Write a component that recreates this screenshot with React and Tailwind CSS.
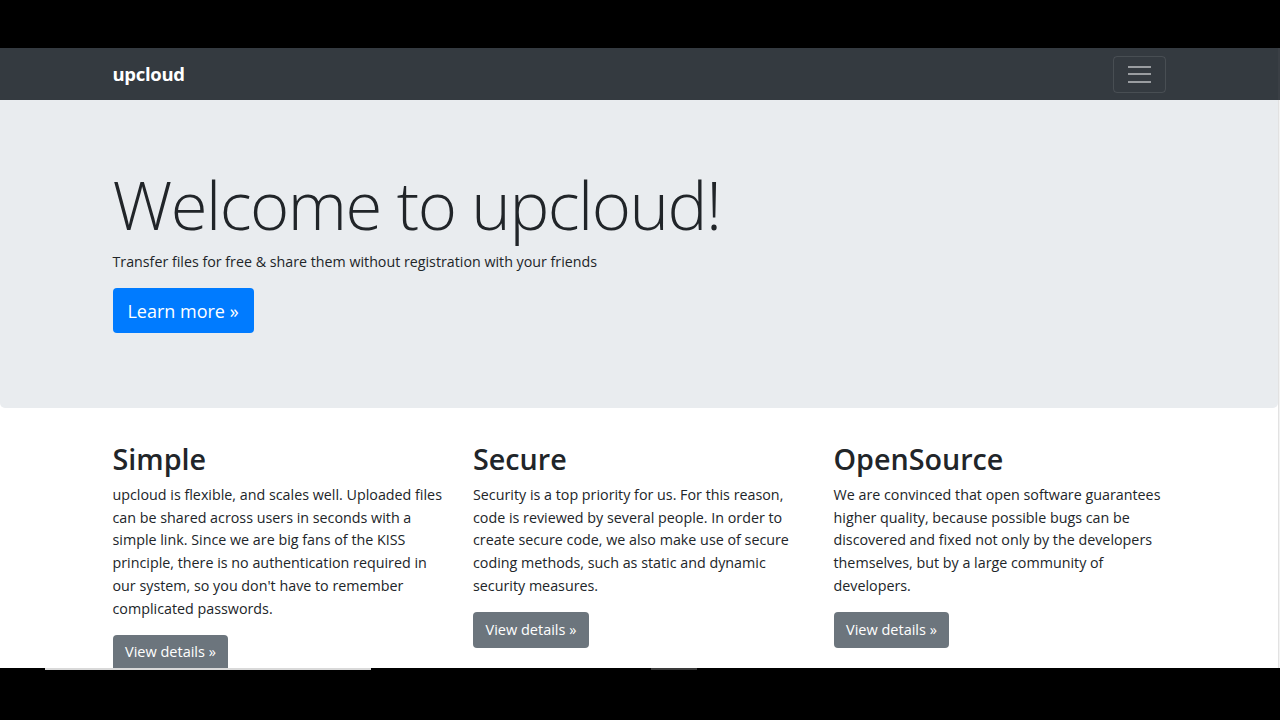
import React from "react";

const font = { fontFamily: '"Open Sans", "Noto Sans", sans-serif' };

const cols = [
  {
    title: "Simple",
    lines: [
      "upcloud is flexible, and scales well. Uploaded files",
      "can be shared across users in seconds with a",
      "simple link. Since we are big fans of the KISS",
      "principle, there is no authentication required in",
      "our system, so you don't have to remember",
      "complicated passwords.",
    ],
  },
  {
    title: "Secure",
    lines: [
      "Security is a top priority for us. For this reason,",
      "code is reviewed by several people. In order to",
      "create secure code, we also make use of secure",
      "coding methods, such as static and dynamic",
      "security measures.",
    ],
  },
  {
    title: "OpenSource",
    lines: [
      "We are convinced that open software guarantees",
      "higher quality, because possible bugs can be",
      "discovered and fixed not only by the developers",
      "themselves, but by a large community of",
      "developers.",
    ],
  },
];

export default function App() {
  return (
    <div
      className="w-[1280px] h-[720px] bg-black flex flex-col overflow-hidden text-[#212529]"
      style={font}
    >
      <div className="h-[48px] shrink-0 bg-black" />
      <div className="h-[620px] shrink-0 flex flex-col bg-white overflow-hidden">
        <nav className="h-[52px] shrink-0 bg-[#343a40] flex">
          <div className="w-[1278px] flex items-center">
            <div className="mx-auto w-[1053px] flex items-center justify-between">
              <span className="text-white text-[18.5px] font-bold tracking-[-0.3px] leading-none">
                upcloud
              </span>
              <button className="w-[53px] h-[37px] rounded-[4px] border border-white/10 flex flex-col items-center justify-center gap-[5.5px]">
                <span className="block w-[23px] h-[2px] bg-[#9a9da1]" />
                <span className="block w-[23px] h-[2px] bg-[#9a9da1]" />
                <span className="block w-[23px] h-[2px] bg-[#9a9da1]" />
              </button>
            </div>
          </div>
          <div className="w-[2px] bg-[#3a3f45]" />
        </nav>
        <div className="flex flex-1 min-h-0">
          <div className="w-[1278px] flex flex-col">
            <section className="h-[308px] shrink-0 bg-[#e9ecef] rounded-b-[5px] pt-[63px]">
              <div className="mx-auto w-[1053px]">
                <h1 className="text-[67px] leading-[82px] font-light tracking-[-1.5px] text-[#212529] whitespace-nowrap">
                  Welcome to upcloud!
                </h1>
                <p className="mt-[5px] text-[14.25px] leading-[23px] whitespace-nowrap">
                  Transfer files for free &amp; share them without registration with your friends
                </p>
                <div className="mt-[15px]">
                  <button className="h-[45px] w-[141px] rounded-[4px] bg-[#007bff] text-white text-[18px] leading-none">
                    Learn more »
                  </button>
                </div>
              </div>
            </section>
            <div className="mx-auto w-[1053px] pt-[33px] grid grid-cols-3 gap-x-[28.5px]">
              {cols.map((c) => (
                <div key={c.title} className="flex flex-col items-start">
                  <h2 className="text-[28.7px] leading-[36px] font-semibold text-[#212529]">
                    {c.title}
                  </h2>
                  <p className="mt-[7px] text-[14.3px] leading-[22.7px] text-[#212529]">
                    {c.lines.map((l, i) => (
                      <span key={i} className="block whitespace-nowrap">
                        {l}
                      </span>
                    ))}
                  </p>
                  <button className="mt-[14.5px] h-[36px] px-[12.5px] rounded-[4px] bg-[#6c757d] text-white text-[14.5px] leading-none whitespace-nowrap">
                    View details »
                  </button>
                </div>
              ))}
            </div>
          </div>
          <div className="w-[2px] bg-[#f3f3f3] border-l border-[#e2e2e2]" />
        </div>
      </div>
      <div className="h-[52px] shrink-0 bg-black flex flex-col">
        <div className="h-[1.5px] flex">
          <div className="w-[45px]" />
          <div className="w-[326px] bg-[#d9d9d9]" />
          <div className="w-[280px]" />
          <div className="w-[46px] bg-[#3a3a3a]" />
        </div>
      </div>
    </div>
  );
}
